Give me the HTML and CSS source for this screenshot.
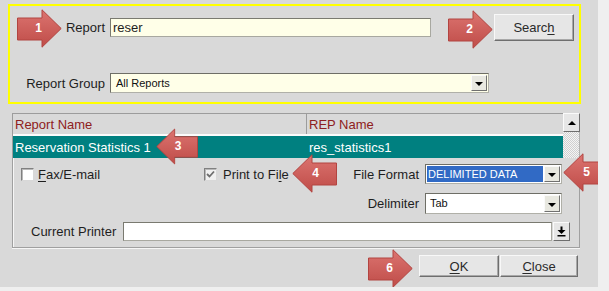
FILE: index.html
```html
<!DOCTYPE html>
<html>
<head>
<meta charset="utf-8">
<link rel="stylesheet" href="styles.css">
</head>
<body>
<div class="window">
  <div class="search-box">
    <div class="row row-report">
      <span class="lbl">Report</span>
      <div class="field field-report">reser</div>
      <button class="btn btn-search">Searc<u>h</u></button>
    </div>
    <div class="row row-group">
      <span class="lbl">Report Group</span>
      <div class="combo combo-group"><span class="combo-text">All Reports</span><span class="drop"><i class="tri"></i></span></div>
    </div>
  </div>

  <div class="grid">
    <div class="grid-body">
      <div class="grid-head"><div class="cell c1">Report Name</div><div class="cell c2">REP Name</div></div>
      <div class="grid-row sel"><div class="cell c1">Reservation Statistics 1</div><div class="cell c2 nodiv">res_statistics1</div></div>
    </div>
    <div class="vscroll"><div class="sb-up"><i class="tri-up"></i></div><div class="sb-track"></div></div>
  </div>

  <div class="panel">
    <div class="prow prow-a">
      <div class="chk-group chk-fax"><span class="chk"></span><span class="chk-text"><u>F</u>ax/E-mail</span></div>
      <div class="chk-group chk-print"><span class="chk chk-on"><svg width="11" height="11" viewBox="0 0 11 11"><polyline points="2,5 4.5,7.5 9,2.5" fill="none" stroke="#6e6e6e" stroke-width="1.8"/></svg></span><span class="chk-text">Print to Fi<u>l</u>e</span></div>
      <div class="labeled">
        <span class="lbl-r">File Format</span>
        <div class="combo combo-ff"><span class="combo-text hl">DELIMITED DATA</span><span class="drop"><i class="tri"></i></span></div>
      </div>
    </div>
    <div class="prow prow-b">
      <div class="labeled">
        <span class="lbl-r">Delimiter</span>
        <div class="combo combo-ff combo-del"><span class="combo-text">Tab</span><span class="drop"><i class="tri"></i></span></div>
      </div>
    </div>
    <div class="prow prow-c">
      <span class="lbl-printer">Current Printer</span>
      <div class="field field-printer"></div>
      <span class="pick"><svg width="9" height="11" viewBox="0 0 9 11"><rect x="3.5" y="0.5" width="2" height="4" fill="#000"/><polygon points="0.5,4 8.5,4 4.5,8" fill="#000"/><rect x="0.5" y="9" width="8" height="1.5" fill="#000"/></svg></span>
    </div>
  </div>

  <div class="footer">
    <button class="btn btn-ok"><u>O</u>K</button>
    <button class="btn btn-close"><u>C</u>lose</button>
  </div>

  <div class="arrow a1"><svg width="45" height="39" viewBox="0 0 45 39"><defs><linearGradient id="g1" x1="0" y1="0" x2="0" y2="1"><stop offset="0" stop-color="#dc7470"/><stop offset="1" stop-color="#bf4c48"/></linearGradient></defs><polygon points="0.5,9 25,9 25,0.8 44.2,19.5 25,38.2 25,31 0.5,31" fill="url(#g1)" stroke="#b24440" stroke-width="1"/></svg><span class="num">1</span></div>
  <div class="arrow a2"><svg width="45" height="39" viewBox="0 0 45 39"><polygon points="0.5,9 25,9 25,0.8 44.2,19.5 25,38.2 25,31 0.5,31" fill="url(#g1)" stroke="#b24440" stroke-width="1"/></svg><span class="num">2</span></div>
  <div class="arrow a3 left"><svg width="42" height="39" viewBox="0 0 45 39"><polygon points="0.5,9 25,9 25,0.8 44.2,19.5 25,38.2 25,31 0.5,31" fill="url(#g1)" stroke="#b24440" stroke-width="1"/></svg><span class="num">3</span></div>
  <div class="arrow a4 left"><svg width="45" height="39" viewBox="0 0 45 39"><polygon points="0.5,9 25,9 25,0.8 44.2,19.5 25,38.2 25,31 0.5,31" fill="url(#g1)" stroke="#b24440" stroke-width="1"/></svg><span class="num">4</span></div>
  <div class="arrow a5 left"><svg width="45" height="39" viewBox="0 0 45 39"><polygon points="0.5,9 25,9 25,0.8 44.2,19.5 25,38.2 25,31 0.5,31" fill="url(#g1)" stroke="#b24440" stroke-width="1"/></svg><span class="num">5</span></div>
  <div class="arrow a6"><svg width="45" height="39" viewBox="0 0 45 39"><polygon points="0.5,9 25,9 25,0.8 44.2,19.5 25,38.2 25,31 0.5,31" fill="url(#g1)" stroke="#b24440" stroke-width="1"/></svg><span class="num">6</span></div>
</div>
</body>
</html>
```
FILE: styles.css
```css
body {
  margin: 0;
  background: #efefef;
  font-family: "Liberation Sans", Arial, sans-serif;
  color: #1e1e1e;
}
.window {
  position: relative;
  width: 598px;
  height: 287px;
  background: #d9d9d9;
  box-sizing: border-box;
  padding-top: 4px;
  overflow: hidden;
}
u { text-decoration: underline; text-underline-offset: 2px; }

/* search box */
.search-box {
  margin-left: 8px;
  width: 573px;
  height: 100px;
  box-sizing: border-box;
  border: 2px solid #ffff00;
  padding-top: 8px;
}
.row { display: flex; align-items: center; }
.row-report { height: 27px; }
.row-group { margin-top: 32px; height: 20px; }
.lbl {
  flex: none;
  width: 95px;
  margin-right: 5px;
  text-align: right;
  font-size: 13px;
}
.field {
  box-sizing: border-box;
  height: 19px;
  border: 1px solid;
  border-color: #7a7a70 #a8a8a0 #a8a8a0 #7a7a70;
  background: #fff;
}
.field-report {
  width: 321px;
  background: #ffffe8;
  font-size: 13px;
  line-height: 17px;
  padding-left: 2px;
}
.btn {
  box-sizing: border-box;
  background: #e6e6e6;
  border: 1px solid;
  border-color: #f8f8f8 #6e6e6e #6e6e6e #f8f8f8;
  box-shadow: inset -1px -1px 0 #a8a8a8;
  font-family: "Liberation Sans", Arial, sans-serif;
  font-size: 13px;
  color: #2a2a2a;
  padding: 0;
}
.btn-search { margin-left: 63px; width: 80px; height: 27px; }

.combo {
  display: flex;
  box-sizing: border-box;
  height: 20px;
  border: 1px solid;
  border-color: #6e6e66 #b0b0a8 #b0b0a8 #6e6e66;
  background: #fff;
}
.combo-group { width: 379px; background: #ffffe8; }
.combo-text {
  flex: 1;
  font-size: 11px;
  line-height: 18px;
  padding-left: 5px;
  color: #111;
}
.drop {
  flex: none;
  box-sizing: border-box;
  width: 16px;
  height: 16px;
  margin: 1px;
  background: #e8e8e0;
  border: 1px solid;
  border-color: #fafafa #707070 #707070 #fafafa;
  display: flex;
  align-items: center;
  justify-content: center;
}
.tri {
  width: 0; height: 0;
  border-left: 4px solid transparent;
  border-right: 4px solid transparent;
  border-top: 4px solid #000;
  margin-top: 2px;
}

/* grid */
.grid {
  margin: 9px 0 0 12px;
  width: 568px;
  height: 45px;
  display: flex;
}
.grid-body {
  width: 551px;
  box-sizing: border-box;
  border-top: 1px solid #9c9c9c;
  border-left: 1px solid #9c9c9c;
}
.grid-head {
  display: flex;
  height: 20px;
  border-bottom: 2px solid #fbfbfb;
  color: #8e2020;
}
.grid-row { display: flex; height: 22px; }
.sel { background: #008080; color: #fff; }
.cell {
  box-sizing: border-box;
  font-size: 13px;
  padding-left: 2px;
  display: flex;
  align-items: center;
}
.c1 { width: 293px; }
.c2 { width: 257px; border-left: 1px solid #9c9c9c; }
.nodiv { border-left-color: #008080; }
.vscroll { width: 17px; display: flex; flex-direction: column; }
.sb-up {
  box-sizing: border-box;
  height: 19px;
  background: #e6e6e6;
  border: 1px solid;
  border-color: #fafafa #6e6e6e #6e6e6e #fafafa;
  display: flex;
  align-items: center;
  justify-content: center;
}
.tri-up {
  width: 0; height: 0;
  border-left: 4px solid transparent;
  border-right: 4px solid transparent;
  border-bottom: 4px solid #000;
}
.sb-track {
  flex: 1;
  background: repeating-conic-gradient(#d0d0d0 0 25%, #f4f4f4 0 50%) 0 0 / 2px 2px;
  border-right: 1px solid #b0b0b0;
}

/* panel */
.panel {
  margin-left: 12px;
  width: 568px;
  height: 90px;
  box-sizing: border-box;
  border: 1px solid #a0a0a0;
  border-top: none;
  box-shadow: inset 1px 0 0 #f6f6f6, 0 1px 0 #f6f6f6;
  padding-top: 6px;
}
.prow { display: flex; align-items: center; }
.prow-a { height: 20px; }
.prow-b { height: 21px; margin-top: 9px; justify-content: flex-end; }
.prow-c { height: 19px; margin-top: 8px; }
.chk-group { display: flex; align-items: center; font-size: 13px; }
.chk-fax { margin-left: 8px; width: 183px; }
.chk {
  box-sizing: border-box;
  width: 13px;
  height: 13px;
  background: #fff;
  border: 1px solid;
  border-color: #808080 #d8d8d8 #d8d8d8 #808080;
  box-shadow: inset 1px 1px 0 #b8b8b8;
  display: flex;
  align-items: center;
  justify-content: center;
}
.chk-on { background: #f0f0f0; }
.chk-fax .chk-text { margin-left: 4px; }
.chk-print .chk-text { margin-left: 6px; }
.labeled {
  margin-left: auto;
  margin-right: 17px;
  display: flex;
  align-items: center;
}
.lbl-r {
  width: 90px;
  margin-right: 6px;
  text-align: right;
  font-size: 13px;
}
.combo-ff { width: 137px; }
.combo-del { height: 21px; }
.combo-del .combo-text { line-height: 19px; padding-left: 4px; }
.combo-del .drop { height: 17px; }
.hl {
  background: #316ac5;
  color: #fff;
  margin: 1px 0 1px 1px;
  padding-left: 1px;
  line-height: 16px;
}
.lbl-printer {
  margin-left: 18px;
  width: 87px;
  margin-right: 5px;
  font-size: 13px;
  white-space: nowrap;
}
.field-printer { width: 429px; }
.pick {
  box-sizing: border-box;
  width: 17px;
  height: 19px;
  margin-left: 1px;
  background: #e6e6e6;
  border: 1px solid;
  border-color: #fafafa #6e6e6e #6e6e6e #fafafa;
  display: flex;
  align-items: center;
  justify-content: center;
}

/* footer */
.footer {
  display: flex;
  justify-content: flex-end;
  padding-right: 20px;
  margin-top: 7px;
}
.btn-ok { width: 80px; height: 22px; margin-right: 1px; }
.btn-close { width: 78px; height: 22px; }

/* annotation arrows */
.arrow {
  position: absolute;
  width: 45px;
  height: 39px;
}
.arrow svg { display: block; }
.arrow.left svg { transform: scaleX(-1); }
.num {
  position: absolute;
  left: 0;
  right: 0;
  top: 0;
  line-height: 39px;
  text-align: center;
  color: #fff;
  font-weight: bold;
  font-size: 12px;
  padding-right: 2px;
}
.arrow.left .num { padding-right: 0; padding-left: 2px; }
.a1 { left: 17px; top: 9px; }
.a2 { left: 448px; top: 10px; }
.a3 { left: 156px; top: 127px; width: 42px; }
.a4 { left: 292px; top: 154px; }
.a5 { left: 563px; top: 153px; }
.a6 { left: 368px; top: 249px; }
```
